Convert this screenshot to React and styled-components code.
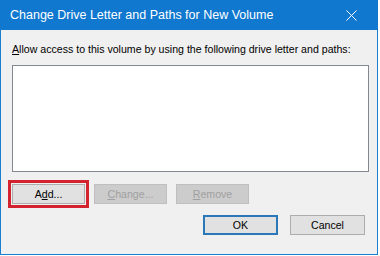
import React from "react";
import styled, { createGlobalStyle } from "styled-components";

const Global = createGlobalStyle`
  html, body { margin: 0; padding: 0; background: #ffffff; }
  body { font-family: "Liberation Sans", Arial, sans-serif; }
`;

const Window = styled.div`
  box-sizing: border-box;
  width: 378px;
  height: 255px;
  display: flex;
  flex-direction: column;
  border: 1px solid #1a7fd0;
  border-top: none;
  background: #f0f0f0;
`;

const TitleBar = styled.div`
  height: 30px;
  flex: none;
  margin: 0 -1px;
  background: #1078cf;
  color: #ffffff;
  display: flex;
  align-items: center;
  justify-content: space-between;
  padding: 0 21px 0 10px;
  font-size: 12.5px;
`;

const Close = styled.svg`
  width: 11px;
  height: 11px;
  display: block;
`;

const Body = styled.div`
  flex: 1;
  display: flex;
  flex-direction: column;
  padding: 12px 8px 0 11px;
  font-size: 10.6px;
  color: #000;
`;

const Label = styled.div`
  line-height: 14px;
  white-space: nowrap;
`;

const Key = styled.span`
  text-decoration: underline;
  text-underline-offset: 1px;
`;

const ListBox = styled.div`
  box-sizing: border-box;
  margin-top: 9px;
  height: 107px;
  background: #ffffff;
  border: 1px solid #828790;
`;

const Row = styled.div`
  display: flex;
  gap: ${(p) => p.$gap}px;
  justify-content: ${(p) => (p.$end ? "flex-end" : "flex-start")};
  margin-top: ${(p) => p.$top}px;
  padding-right: ${(p) => p.$right || 0}px;
`;

const Button = styled.button`
  box-sizing: border-box;
  width: ${(p) => p.$w}px;
  height: 20px;
  padding: 0;
  font-family: "Liberation Sans", Arial, sans-serif;
  font-size: 10.6px;
  background: ${(p) => (p.disabled ? "#cccccc" : "#e1e1e1")};
  color: ${(p) => (p.disabled ? "#a0a0a0" : "#000000")};
  border: ${(p) =>
    p.$default ? "2px solid #2a78b7" : p.disabled ? "1px solid #bfbfbf" : "1px solid #adadad"};
  outline: ${(p) => (p.$highlight ? "3px solid #d2232f" : "none")};
  outline-offset: 1px;
  border-radius: 0;
`;

export default function App() {
  return (
    <>
      <Global />
      <Window>
        <TitleBar>
          <span>Change Drive Letter and Paths for New Volume</span>
          <Close viewBox="0 0 11 11">
            <path d="M0.5 0.5 L10.5 10.5 M10.5 0.5 L0.5 10.5" stroke="#ffffff" strokeWidth="1" fill="none" />
          </Close>
        </TitleBar>
        <Body>
          <Label>
            <Key>A</Key>llow access to this volume by using the following drive letter and paths:
          </Label>
          <ListBox />
          <Row $gap={9} $top={12}>
            <Button $w={73} $highlight>
              A<Key>d</Key>d...
            </Button>
            <Button $w={73} disabled>
              <Key>C</Key>hange...
            </Button>
            <Button $w={73} disabled>
              <Key>R</Key>emove
            </Button>
          </Row>
          <Row $gap={12} $top={11} $end $right={4}>
            <Button $w={75} $default>OK</Button>
            <Button $w={75}>Cancel</Button>
          </Row>
        </Body>
      </Window>
    </>
  );
}
